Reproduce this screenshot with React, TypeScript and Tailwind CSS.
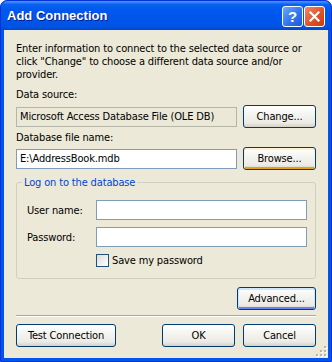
import React from "react";

const font = "[font-family:'DejaVu_Sans_Condensed','Liberation_Sans',sans-serif]";

function XPButton({ label, width, variant }: { label: string; width: string; variant?: "hot" | "default" }) {
    const ring =
        variant === "hot"
            ? "shadow-[inset_0_1px_0_1px_#FFF0CF,inset_0_-1px_0_1px_#E5A01A]"
            : variant === "default"
            ? "shadow-[inset_0_1px_0_1px_#CEE7FF,inset_0_-1px_0_1px_#6982EE]"
            : "";
    return (
        <button
            className={`${width} h-[23px] shrink-0 rounded-[3px] border border-[#003C74] bg-[linear-gradient(to_bottom,#FFFFFF_0%,#F4F4F0_40%,#ECEBE6_80%,#D6D0C5_100%)] text-[11px] tracking-[-0.15px] text-black ${ring}`}
        >
            {label}
        </button>
    );
}

function TextBox({ value, disabled }: { value?: string; disabled?: boolean }) {
    return (
        <div
            className={`flex-1 h-[20px] border px-[3px] flex items-center text-[11px] text-black ${
                disabled ? "bg-[#EBE8D8] border-[#B5B5A8]" : "bg-white border-[#7F9DB9]"
            }`}
        >
            {value}
        </div>
    );
}

export default function App() {
    return (
        <div className={`w-[332px] h-[362px] flex flex-col rounded-t-[7px] bg-[#0055EA] border border-[#0831D9] ${font}`}>
            {/* title bar */}
            <div className="h-[29px] shrink-0 flex items-center justify-between pl-[6px] pr-[6px] rounded-t-[7px] bg-[linear-gradient(to_bottom,#4A9BFF_0%,#0B62F0_12%,#0058EE_30%,#0055EA_70%,#0052E2_90%,#0046CA_100%)]">
                <span className="text-white font-bold text-[13px] [font-family:'Liberation_Sans',sans-serif] [text-shadow:1px_1px_0_#0A1883] pt-[1px]">
                    Add Connection
                </span>
                <div className="flex gap-[1px] pt-[2px]">
                    <div className="w-[21px] h-[21px] rounded-[3px] border border-white bg-[linear-gradient(to_bottom_right,#6AA8FF,#3275F0_55%,#1F55D8)] flex items-center justify-center text-white font-bold text-[15px] [font-family:'Liberation_Sans',sans-serif] leading-none">
                        ?
                    </div>
                    <div className="w-[21px] h-[21px] rounded-[3px] border border-white bg-[linear-gradient(to_bottom_right,#F08A6A,#E2522A_55%,#C93A12)] flex items-center justify-center">
                        <svg width="11" height="11" viewBox="0 0 11 11">
                            <path d="M1.5 1.5 L9.5 9.5 M9.5 1.5 L1.5 9.5" stroke="white" strokeWidth="2.2" strokeLinecap="square" />
                        </svg>
                    </div>
                </div>
            </div>

            {/* client area */}
            <div className="relative flex-1 mx-[3px] mb-[3px] bg-[#ECE9D8] flex flex-col px-[12px] pt-[12px] text-[11px] leading-[13px] tracking-[-0.15px] text-black">
                <p>
                    Enter information to connect to the selected data source or
                    <br />
                    click "Change" to choose a different data source and/or provider.
                </p>
                <div className="mt-[7px]">Data source:</div>
                <div className="mt-[4px] flex items-center gap-[6px]">
                    <TextBox value="Microsoft Access Database File (OLE DB)" disabled />
                    <XPButton label="Change..." width="w-[73px]" />
                </div>
                <div className="mt-[3px]">Database file name:</div>
                <div className="mt-[3px] flex items-center gap-[6px]">
                    <TextBox value="E:\AddressBook.mdb" />
                    <XPButton label="Browse..." width="w-[73px]" variant="hot" />
                </div>

                <fieldset className="mt-[6px] rounded-[3px] border border-[#D0D0BF] pl-[10px] pr-[8px] pt-[11px] pb-[11px] flex flex-col">
                    <legend className="ml-[-5px] px-[2px] text-[#0046D5]">Log on to the database</legend>
                    <div className="flex items-center">
                        <span className="w-[69px]">User name:</span>
                        <TextBox />
                    </div>
                    <div className="mt-[7px] flex items-center">
                        <span className="w-[69px]">Password:</span>
                        <TextBox />
                    </div>
                    <div className="mt-[7px] flex items-center pl-[69px]">
                        <div className="w-[13px] h-[13px] border border-[#1C5180] bg-[linear-gradient(to_bottom_right,#DCDCD7,#FFFFFF)]" />
                        <span className="ml-[3px]">Save my password</span>
                    </div>
                </fieldset>

                <div className="mt-[8px] flex justify-end">
                    <XPButton label="Advanced..." width="w-[79px]" variant="default" />
                </div>
                <div className="mt-[5px] h-[2px] border-t border-[#ACA899] border-b border-b-white" />
                <div className="mt-[7px] flex items-center">
                    <XPButton label="Test Connection" width="w-[100px]" />
                    <div className="flex-1" />
                    <div className="flex gap-[8px]">
                        <XPButton label="OK" width="w-[73px]" />
                        <XPButton label="Cancel" width="w-[73px]" />
                    </div>
                </div>

                {/* size grip */}
                <svg className="absolute right-[1px] bottom-[1px]" width="11" height="11" viewBox="0 0 11 11">
                    {[
                        [8, 0], [8, 4], [4, 4], [8, 8], [4, 8], [0, 8],
                    ].map(([x, y], i) => (
                        <g key={i}>
                            <rect x={x + 1} y={y + 1} width="2" height="2" fill="#FFFFFF" />
                            <rect x={x} y={y} width="2" height="2" fill="#B8B4A2" />
                        </g>
                    ))}
                </svg>
            </div>
        </div>
    );
}
